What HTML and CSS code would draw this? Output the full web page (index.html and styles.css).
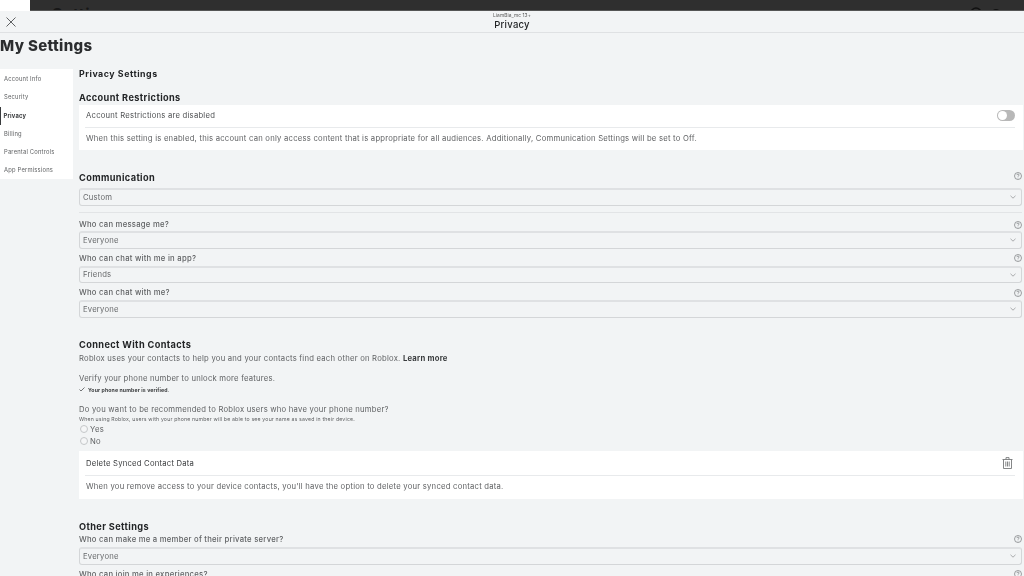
FILE: index.html
```html
<!DOCTYPE html>
<html lang="en">
<head>
<meta charset="utf-8">
<title>Privacy</title>
<link rel="stylesheet" href="styles.css">
</head>
<body>
<div class="backdrop">
  <div class="backdrop-white"></div>
  <div class="backdrop-dark">
    <span class="ghost-title">Settings</span>
    <svg class="ghost-icons" width="30" height="12" viewBox="0 0 30 12"><circle cx="6" cy="6" r="5" fill="none" stroke="#111" stroke-width="1.500"/><circle cx="26" cy="6" r="4" fill="#111"/></svg>
  </div>
</div>
<header class="modal-head">
  <button class="close" aria-label="Close"><svg width="10" height="10" viewBox="0 0 10 10"><path d="M.5.5l9 9M9.500.5l-9 9" stroke="#393b3d" stroke-width=".8" fill="none"/></svg></button>
  <div class="head-center"><div class="head-user">LiamBia_mc 13+</div><div class="head-title">Privacy</div></div>
</header>
<main class="page">
  <h1 class="page-title">My Settings</h1>
  <div class="columns">
    <nav class="sidebar">
      <a class="nav-item">Account Info</a>
      <a class="nav-item">Security</a>
      <a class="nav-item active">Privacy</a>
      <a class="nav-item">Billing</a>
      <a class="nav-item">Parental Controls</a>
      <a class="nav-item">App Permissions</a>
    </nav>
    <section class="content">
      <h2 class="h-top">Privacy Settings</h2>
      <h2 class="h-restrict">Account Restrictions</h2>
      <div class="card card-restrict">
        <div class="card-row"><span class="card-label">Account Restrictions are disabled</span><span class="toggle"><span class="knob"></span></span></div>
        <p class="card-desc">When this setting is enabled, this account can only access content that is appropriate for all audiences. Additionally, Communication Settings will be set to Off.</p>
      </div>
      <div class="label-row h-comm"><h2>Communication</h2><svg class="help help-up"><use href="#help"/></svg></div>
      <div class="select"><span>Custom</span><svg class="chev"><use href="#chev"/></svg></div>
      <hr class="rule">
      <div class="label-row q-first"><span class="q">Who can message me?</span><svg class="help"><use href="#help"/></svg></div>
      <div class="select"><span>Everyone</span><svg class="chev"><use href="#chev"/></svg></div>
      <div class="label-row q-next"><span class="q">Who can chat with me in app?</span><svg class="help"><use href="#help"/></svg></div>
      <div class="select"><span>Friends</span><svg class="chev"><use href="#chev"/></svg></div>
      <div class="label-row q-next"><span class="q">Who can chat with me?</span><svg class="help"><use href="#help"/></svg></div>
      <div class="select"><span>Everyone</span><svg class="chev"><use href="#chev"/></svg></div>

      <h2 class="h-connect">Connect With Contacts</h2>
      <p class="text t-uses">Roblox uses your contacts to help you and your contacts find each other on Roblox. <b class="learn">Learn more</b></p>
      <p class="text t-verify">Verify your phone number to unlock more features.</p>
      <p class="verified"><svg width="6" height="5" viewBox="0 0 6 5"><path d="M.5 2.500l1.500 1.500 3.500-3.500" stroke="#393b3d" stroke-width=".7" fill="none"/></svg>Your phone number is verified.</p>
      <p class="text t-want">Do you want to be recommended to Roblox users who have your phone number?</p>
      <p class="small">When using Roblox, users with your phone number will be able to see your name as saved in their device.</p>
      <div class="radio r-yes"><span class="dot"></span>Yes</div>
      <div class="radio r-no"><span class="dot"></span>No</div>
      <div class="card card-delete">
        <div class="card-row"><span class="card-label dark">Delete Synced Contact Data</span>
          <svg class="trash" width="11" height="12" viewBox="0 0 11 12"><g fill="none" stroke="#77797b" stroke-width=".9"><path d="M.5 2.500h10M4 2.200V.6h3v1.600M1.500 2.500v9h8v-9"/><path d="M3.800 4.500v5M5.500 4.500v5M7.200 4.500v5"/></g></svg>
        </div>
        <p class="card-desc">When you remove access to your device contacts, you'll have the option to delete your synced contact data.</p>
      </div>
      <h2 class="h-other">Other Settings</h2>
      <div class="label-row q-other"><span class="q">Who can make me a member of their private server?</span><svg class="help"><use href="#help"/></svg></div>
      <div class="select"><span>Everyone</span><svg class="chev"><use href="#chev"/></svg></div>
      <div class="label-row q-next"><span class="q">Who can join me in experiences?</span><svg class="help"><use href="#help"/></svg></div>
    </section>
  </div>
</main>
<svg class="defs" width="0" height="0">
  <symbol id="help" viewBox="0 0 8 8"><circle cx="4" cy="4" r="3.500" fill="none" stroke="#77797b" stroke-width=".7"/><path d="M2.900 3.100c0-.7.5-1.100 1.100-1.100s1.100.4 1.100 1c0 .9-1.100.9-1.100 1.700" fill="none" stroke="#77797b" stroke-width=".7"/><circle cx="4" cy="5.900" r=".4" fill="#77797b"/></symbol>
  <symbol id="chev" viewBox="0 0 6 4"><path d="M.5.800l2.500 2.400L5.500.8" fill="none" stroke="#8a8c8e" stroke-width=".7"/></symbol>
</svg>
</body>
</html>
```
FILE: styles.css
```css
* { box-sizing: border-box; }
html, body { margin: 0; padding: 0; height: 576px; overflow: hidden; }
body { background: #f2f4f5; font-family: "Inter", "Liberation Sans", sans-serif; color: #5f6163; letter-spacing: .25px; }
h1, h2, p { margin: 0; }

.backdrop { display: flex; height: 11px; }
.backdrop-white { width: 30px; background: #fff; }
.backdrop-dark { flex: 1; height: 11px; overflow: hidden; background: #2f2f2f; border-bottom: 1px solid #555; display: flex; justify-content: space-between; align-items: flex-start; padding: 5px 24px 0 22px; }
.ghost-title { font-size: 16px; line-height: 18px; font-weight: 700; color: #171717; letter-spacing: .5px; }
.ghost-icons { flex: none; margin-top: 2px; }

.modal-head { position: relative; height: 22px; display: flex; justify-content: center; background: #f2f4f5; border-bottom: 1px solid #dfe1e3; }
.close { position: absolute; left: 0; top: 0; width: 21px; height: 21px; padding: 0; border: 0; background: none; display: flex; align-items: center; justify-content: center; }
.head-center { text-align: center; will-change: opacity; }
.head-user { font-size: 4.800px; line-height: 6px; margin-top: 1px; color: #555; letter-spacing: .1px; }
.head-title { font-size: 9.500px; line-height: 14px; font-weight: 500; color: #232527; }

.page { will-change: opacity; }
.page-title { font-size: 15px; line-height: 20px; font-weight: 800; color: #2b2d2f; margin-top: 3px; letter-spacing: .35px; }
.columns { display: flex; gap: 6px; margin-top: 13px; }
.sidebar { width: 73px; height: 110px; background: #fff; flex: none; display: flex; flex-direction: column; padding-top: 1px; }
.nav-item { height: 18.300px; line-height: 18.300px; padding-left: 4px; font-size: 5.800px; color: #606264; letter-spacing: .2px; }
.nav-item.active { font-weight: 700; color: #393b3d; border-left: 1.500px solid #393b3d; padding-left: 2.500px; }

.content { flex: 1; min-width: 0; padding-right: 2px; margin-top: -1px; }
h2 { font-size: 9.200px; font-weight: 700; line-height: 12px; color: #232527; letter-spacing: .38px; }
.h-top { font-size: 8.800px; letter-spacing: .55px; }
.h-restrict { margin-top: 11.500px; }

.card { background: #fff; padding: 0 8px 0 6px; margin-top: 1.500px; width: 944px; }
.card-restrict { height: 45px; }
.card-row { height: 23px; display: flex; align-items: center; justify-content: space-between; border-bottom: 1px solid #e8eaec; padding-bottom: 2px; }
.card-label { font-size: 7.700px; color: #4f5153; letter-spacing: .22px; padding-left: 1px; }
.card-label.dark { color: #393b3d; }
.card-desc { font-size: 7.700px; line-height: 22px; color: #606264; letter-spacing: .225px; padding-left: 1px; }
.toggle { width: 18px; height: 11px; border-radius: 6px; background: #b8b8b8; display: flex; padding: 1px; }
.knob { width: 9px; height: 9px; border-radius: 50%; background: #fff; }

.label-row { display: flex; justify-content: space-between; align-items: center; height: 12px; }
.label-row h2 { line-height: 12px; }
.help { width: 8px; height: 8px; margin-right: 0; flex: none; }
.help-up { margin-bottom: 4px; }
.h-comm { margin-top: 22px; }
.q { font-size: 7.700px; font-weight: 500; color: #606264; letter-spacing: .25px; }
.q-first { margin-top: 5.500px; }
.q-next { margin-top: 3.500px; }
.q-other { margin-top: 0; }

.select { height: 17.500px; margin-top: 1.500px; border: 1px solid #d4d6d8; border-top: 2px solid #dfe1e3; border-radius: 3px; background: #f2f4f5; padding: 0 5px 0 3px; display: flex; align-items: center; justify-content: space-between; font-size: 7.700px; color: #686a6c; letter-spacing: .2px; }
.h-comm + .select { margin-top: 4px; }
.q-first + .select { margin-top: .5px; }
.q-other + .select { margin-top: 2px; }
.chev { width: 6px; height: 4px; }
.rule { border: 0; border-top: 1px solid #e2e4e6; margin: 6.500px 0 0; height: 0; }

.h-connect { margin-top: 21px; }
.text { font-size: 7.700px; line-height: 12px; color: #606264; letter-spacing: .22px; }
.t-uses { margin-top: 2px; }
.learn { color: #393b3d; font-weight: 700; }
.t-verify { margin-top: 8px; }
.verified { font-size: 5.200px; line-height: 8px; color: #393b3d; font-weight: 700; margin-top: 1px; display: flex; gap: 3px; align-items: center; letter-spacing: .12px; }
.t-want { margin-top: 10px; }
.small { font-size: 5.200px; line-height: 6px; color: #606264; letter-spacing: .17px; }
.radio { display: flex; align-items: center; gap: 2px; font-size: 7.700px; color: #606264; height: 12px; letter-spacing: .3px; }
.r-yes { margin-top: 1.500px; }
.dot { width: 8px; height: 8px; border: 1px solid #c4c6c8; border-radius: 50%; background: #f5f6f7; margin-left: 1px; }

.card-delete { height: 48px; margin-top: 4px; }
.card-delete .card-row { height: 25px; padding-bottom: 0; }
.trash { flex: none; margin-right: 2px; }
.h-other { margin-top: 22px; }
.defs { position: absolute; }
```
